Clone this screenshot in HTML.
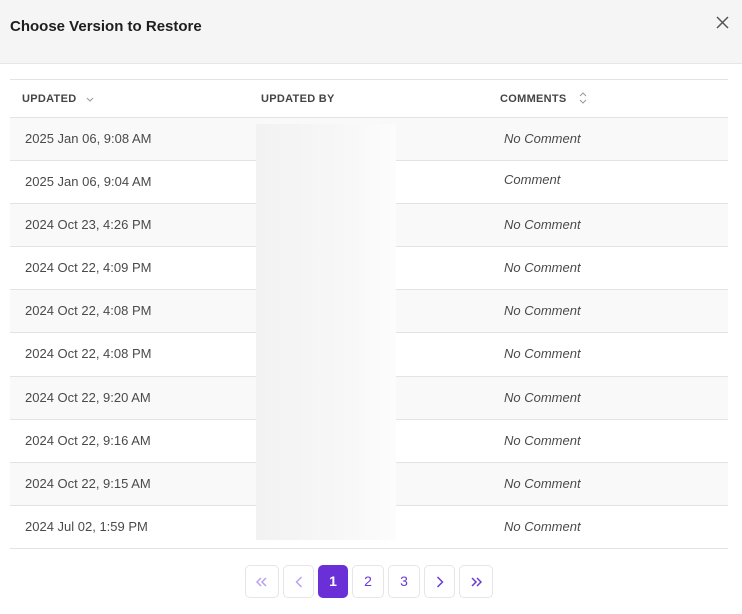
<!DOCTYPE html>
<html><head><style>
body{margin:0;width:742px;height:614px;background:#fff;font-family:"Liberation Sans",Arial,sans-serif;position:relative;overflow:hidden}
.hdr{position:absolute;left:0;top:0;width:742px;height:63px;background:#f5f5f5;border-bottom:1px solid #e6e6e6}
.hdr h1{position:absolute;left:10px;top:18px;margin:0;font-size:15px;font-weight:bold;color:#1e1e1e}
.x{position:absolute;left:716px;top:16px}
.tbl{position:absolute;left:10px;top:79px;width:718px;border-top:1px solid #e3e3e3}
.th{height:37px;border-bottom:1px solid #e3e3e3;position:relative;font-size:11px;font-weight:bold;color:#444;letter-spacing:.3px}
.th span{position:absolute;top:13px}
.row{height:42.1px;border-bottom:1px solid #e3e3e3;position:relative;font-size:13px;color:#4a4a4a}
.row:nth-child(even){background:#f9f9f9}
.row .d{position:absolute;left:15px;top:13px}
.row .c{position:absolute;left:494px;top:13px;font-style:italic}
.blur{position:absolute;left:256px;top:124px;width:140px;height:416px;background:linear-gradient(90deg,#f2f2f2,#f7f7f7 60%,#fcfcfc)}
.pg{position:absolute;top:565px;border:1px solid #e6e6e6;border-radius:5px;text-align:center;line-height:31px;font-size:14px;color:#6b3ad6;box-sizing:border-box;height:33px}
.pg svg{position:absolute;left:50%;top:50%;transform:translate(-50%,-50%)}
</style></head><body>
<div class="hdr"><h1>Choose Version to Restore</h1>
<svg class="x" width="13" height="13" viewBox="0 0 13 13"><path d="M1 1L12 12M12 1L1 12" stroke="#555" stroke-width="1.5"/></svg></div>
<div class="tbl">
<div class="th"><span style="left:12px">UPDATED</span>
<svg style="position:absolute;left:76px;top:17px" width="8" height="5" viewBox="0 0 8 5"><path d="M1 1L4 4L7 1" stroke="#999" fill="none"/></svg>
<span style="left:251px">UPDATED BY</span><span style="left:490px">COMMENTS</span>
<svg style="position:absolute;left:569px;top:11px" width="8" height="14" viewBox="0 0 8 14"><path d="M1 5L4 2L7 5M1 9L4 12L7 9" stroke="#999" fill="none"/></svg></div>
<div class="row"><span class="d">2025 Jan 06, 9:08 AM</span><span class="c">No Comment</span></div>
<div class="row"><span class="d">2025 Jan 06, 9:04 AM</span><span class="c" style="top:11px">Comment</span></div>
<div class="row"><span class="d">2024 Oct 23, 4:26 PM</span><span class="c">No Comment</span></div>
<div class="row"><span class="d">2024 Oct 22, 4:09 PM</span><span class="c">No Comment</span></div>
<div class="row"><span class="d">2024 Oct 22, 4:08 PM</span><span class="c">No Comment</span></div>
<div class="row"><span class="d">2024 Oct 22, 4:08 PM</span><span class="c">No Comment</span></div>
<div class="row"><span class="d">2024 Oct 22, 9:20 AM</span><span class="c">No Comment</span></div>
<div class="row"><span class="d">2024 Oct 22, 9:16 AM</span><span class="c">No Comment</span></div>
<div class="row"><span class="d">2024 Oct 22, 9:15 AM</span><span class="c">No Comment</span></div>
<div class="row"><span class="d">2024 Jul 02, 1:59 PM</span><span class="c">No Comment</span></div>
</div>
<div class="blur"></div>
<div class="pg" style="left:245px;width:34px"><svg width="12" height="10" viewBox="0 0 12 10"><path d="M5 1L1 5L5 9M10 1L6 5L10 9" stroke="#b9a0ef" stroke-width="1.5" fill="none"/></svg></div>
<div class="pg" style="left:283px;width:31px"><svg width="7" height="12" viewBox="0 0 7 12"><path d="M6 1L1 6L6 11" stroke="#b9a0ef" stroke-width="1.5" fill="none"/></svg></div>
<div class="pg" style="left:318px;width:30px;background:#6a2fd6;border-color:#6a2fd6;color:#fff;font-weight:bold">1</div>
<div class="pg" style="left:352px;width:32px">2</div>
<div class="pg" style="left:388px;width:32px">3</div>
<div class="pg" style="left:424px;width:31px"><svg width="7" height="12" viewBox="0 0 7 12"><path d="M1 1L6 6L1 11" stroke="#6b3ad6" stroke-width="1.5" fill="none"/></svg></div>
<div class="pg" style="left:459px;width:34px"><svg width="12" height="10" viewBox="0 0 12 10"><path d="M2 1L6 5L2 9M7 1L11 5L7 9" stroke="#6b3ad6" stroke-width="1.5" fill="none"/></svg></div>
</body></html>
